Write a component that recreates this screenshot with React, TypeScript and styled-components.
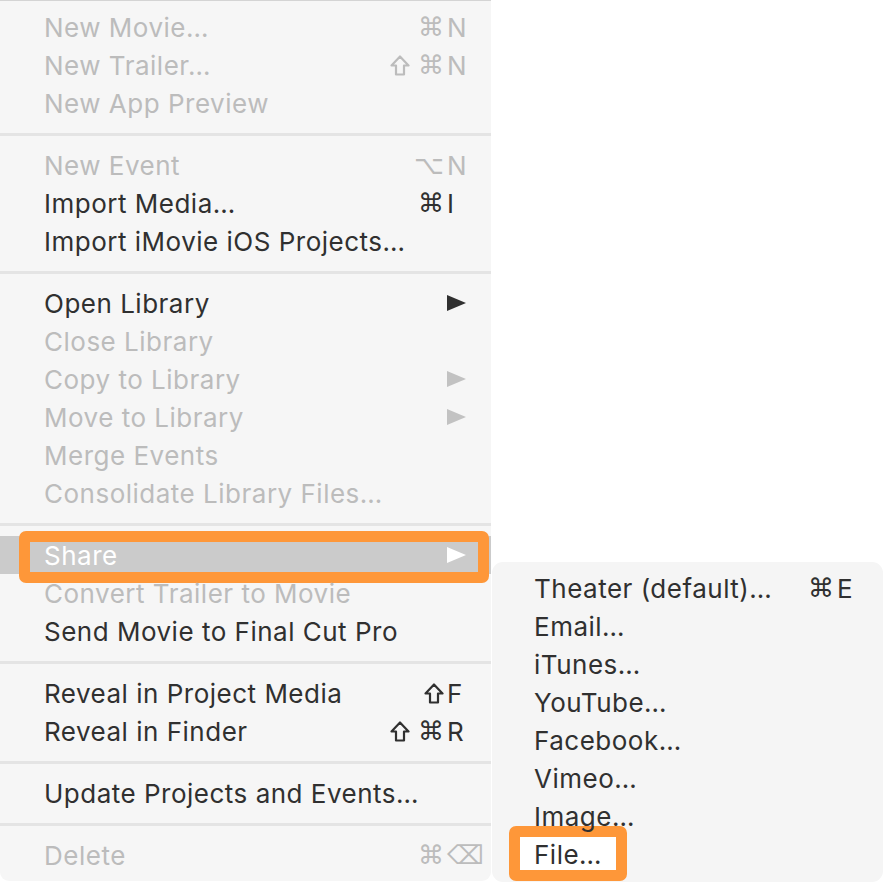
import styled, { createGlobalStyle } from "styled-components";

type Entry = {
  label: string;
  mods?: string;
  keyChar?: string;
  disabled?: boolean;
  submenu?: boolean;
  active?: boolean;
};

const GlobalStyle = createGlobalStyle`
  html, body {
    margin: 0;
    padding: 0;
    background: #ffffff;
  }
  body {
    font-family: Inter, "Helvetica Neue", "Liberation Sans", sans-serif;
  }
`;

const Screen = styled.div`
  display: flex;
  align-items: flex-start;
  gap: 1px;
  width: 883px;
  height: 883px;
  overflow: hidden;
`;

const Menu = styled.div`
  width: 491px;
  flex-shrink: 0;
  background: #f6f6f6;
  border-top: 1px solid #d4d4d4;
  border-radius: 0 0 9px 9px;
  padding: 7px 0 7px;
  box-sizing: border-box;
`;

const SubMenu = styled.div`
  width: 391px;
  flex-shrink: 0;
  margin-top: 562px;
  background: #f5f5f5;
  border-radius: 11px;
  padding: 7px 0 9px;
  box-sizing: border-box;
`;

const Separator = styled.div`
  height: 24px;
  display: flex;
  align-items: center;
  &::after {
    content: "";
    display: block;
    width: 100%;
    height: 3px;
    background: #e4e4e4;
  }
`;

const Row = styled.div<{ $disabled?: boolean; $active?: boolean; $indent: number; $right: number }>`
  position: relative;
  display: grid;
  grid-template-columns: 1fr auto 34px;
  align-items: center;
  height: 38px;
  padding: 0 ${(p) => p.$right}px 0 ${(p) => p.$indent}px;
  font-size: 26px;
  letter-spacing: 0.5px;
  color: ${(p) => (p.$active ? "#ffffff" : p.$disabled ? "#bcbcbc" : "#303030")};
  background: ${(p) => (p.$active ? "#cbcbcb" : "transparent")};
  white-space: nowrap;
`;

const Label = styled.span`
  position: relative;
  z-index: 1;
`;

const Mods = styled.span`
  display: flex;
  align-items: center;
  justify-content: flex-end;
  gap: 8px;
  font-family: "DejaVu Sans", sans-serif;
  font-size: 26px;
  letter-spacing: 0;
  padding-right: 3px;
`;

const Key = styled.span`
  display: flex;
  align-items: center;
  font-size: 26px;
  letter-spacing: 0;
`;

const BackKey = styled.span`
  font-family: "DejaVu Sans", sans-serif;
  font-size: 26px;
`;

const Callout = styled.div<{ $top: number; $left: number; $width: number; $height: number }>`
  position: absolute;
  top: ${(p) => p.$top}px;
  left: ${(p) => p.$left}px;
  width: ${(p) => p.$width}px;
  height: ${(p) => p.$height}px;
  box-sizing: border-box;
  border: 11px solid #fe9739;
  border-radius: 7px;
`;

const FileCallout = styled(Callout)`
  background: #ffffff;
  z-index: 0;
`;

const Arrow = ({ color }: { color: string }) => (
  <svg width="19" height="16" viewBox="0 0 19 16">
    <polygon points="0,0 19,8 0,16" fill={color} />
  </svg>
);

const ShiftIcon = () => (
  <svg width="20" height="21" viewBox="0 0 20 21">
    <polygon
      points="10,1.5 18.5,10.5 14,10.5 14,19.5 6,19.5 6,10.5 1.5,10.5"
      fill="none"
      stroke="currentColor"
      strokeWidth="2.2"
      strokeLinejoin="round"
    />
  </svg>
);

const groups: Entry[][] = [
  [
    { label: "New Movie…", mods: "⌘", keyChar: "N", disabled: true },
    { label: "New Trailer…", mods: "⇧⌘", keyChar: "N", disabled: true },
    { label: "New App Preview", disabled: true },
  ],
  [
    { label: "New Event", mods: "⌥", keyChar: "N", disabled: true },
    { label: "Import Media…", mods: "⌘", keyChar: "I" },
    { label: "Import iMovie iOS Projects…" },
  ],
  [
    { label: "Open Library", submenu: true },
    { label: "Close Library", disabled: true },
    { label: "Copy to Library", submenu: true, disabled: true },
    { label: "Move to Library", submenu: true, disabled: true },
    { label: "Merge Events", disabled: true },
    { label: "Consolidate Library Files…", disabled: true },
  ],
  [
    { label: "Share", submenu: true, active: true },
    { label: "Convert Trailer to Movie", disabled: true },
    { label: "Send Movie to Final Cut Pro" },
  ],
  [
    { label: "Reveal in Project Media", mods: "⇧", keyChar: "F" },
    { label: "Reveal in Finder", mods: "⇧⌘", keyChar: "R" },
  ],
  [{ label: "Update Projects and Events…" }],
  [{ label: "Delete", mods: "⌘", keyChar: "⌫", disabled: true }],
];

const shareItems: Entry[] = [
  { label: "Theater (default)…", mods: "⌘", keyChar: "E" },
  { label: "Email…" },
  { label: "iTunes…" },
  { label: "YouTube…" },
  { label: "Facebook…" },
  { label: "Vimeo…" },
  { label: "Image…" },
  { label: "File…" },
];

const arrowColor = (e: Entry) => (e.active ? "#ffffff" : e.disabled ? "#c2c2c2" : "#303030");

const MenuRow = ({ entry, indent, right }: { entry: Entry; indent: number; right: number }) => (
  <Row $disabled={entry.disabled} $active={entry.active} $indent={indent} $right={right}>
    <Label>{entry.label}</Label>
    <Mods>
      {(entry.mods ?? "").split("").map((m, i) =>
        m === "⇧" ? <ShiftIcon key={i} /> : <span key={i}>{m}</span>
      )}
    </Mods>
    <Key>
      {entry.submenu ? (
        <Arrow color={arrowColor(entry)} />
      ) : entry.keyChar === "⌫" ? (
        <BackKey>⌫</BackKey>
      ) : (
        entry.keyChar
      )}
    </Key>
    {entry.active && <Callout $top={-5} $left={19} $width={470} $height={52} />}
    {entry.label === "File…" && <FileCallout $top={-9} $left={17} $width={118} $height={55} />}
  </Row>
);

export default function App() {
  return (
    <>
      <GlobalStyle />
      <Screen>
        <Menu>
          {groups.map((group, gi) => (
            <div key={gi}>
              {gi > 0 && <Separator />}
              {group.map((entry) => (
                <MenuRow key={entry.label} entry={entry} indent={44} right={10} />
              ))}
            </div>
          ))}
        </Menu>
        <SubMenu>
          {shareItems.map((entry) => (
            <MenuRow key={entry.label} entry={entry} indent={42} right={12} />
          ))}
        </SubMenu>
      </Screen>
    </>
  );
}
